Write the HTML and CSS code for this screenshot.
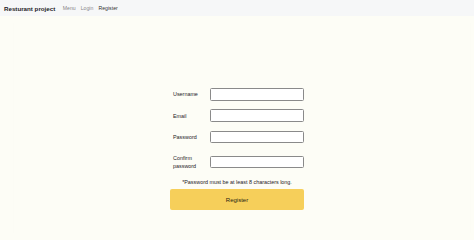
FILE: index.html
```html
<!DOCTYPE html>
<html lang="en">
<head>
<meta charset="utf-8">
<title>Resturant project</title>
<link rel="stylesheet" href="styles.css">
</head>
<body>
<nav class="navbar">
  <a class="brand" href="#">Resturant project</a>
  <div class="nav-links">
    <a class="nav-link" href="#">Menu</a>
    <a class="nav-link" href="#">Login</a>
    <a class="nav-link active" href="#">Register</a>
  </div>
</nav>
<main class="main">
  <form class="form">
    <div class="field">
      <label for="username">Username</label>
      <input id="username" type="text">
    </div>
    <div class="field">
      <label for="email">Email</label>
      <input id="email" type="email">
    </div>
    <div class="field">
      <label for="password">Password</label>
      <input id="password" type="password">
    </div>
    <div class="field field-tall">
      <label for="confirm">Confirm<br>password</label>
      <input id="confirm" type="password">
    </div>
    <p class="note">*Password must be at least 8 characters long.</p>
    <button class="btn" type="button">Register</button>
  </form>
</main>
</body>
</html>
```
FILE: styles.css
```css
html, body {
  margin: 0;
  padding: 0;
}
body {
  background: #fdfdf6;
  font-family: "Liberation Sans", Arial, sans-serif;
  color: #1f2226;
}
.navbar {
  height: 16px;
  background: #f6f7f8;
  display: flex;
  align-items: center;
  padding-left: 4px;
}
.brand {
  font-size: 6.2px;
  font-weight: 700;
  color: #1f2226;
  text-decoration: none;
  margin-right: 7.5px;
}
.nav-links {
  display: flex;
  gap: 5px;
  font-size: 5.2px;
}
.nav-link {
  color: rgba(0, 0, 0, 0.5);
  text-decoration: none;
}
.nav-link.active {
  color: rgba(0, 0, 0, 0.85);
}
.main {
  height: 217px;
  box-sizing: border-box;
  margin: 0 4px 0 14px;
  padding-top: 72px;
  display: flex;
  justify-content: center;
  box-shadow: 0 4px 4px -3px rgba(0, 0, 0, 0.16);
}
.form {
  width: 134px;
  margin-left: -10px;
}
.field {
  display: grid;
  grid-template-columns: 40px 94px;
  align-items: center;
  margin-bottom: 8.8px;
}
.field label {
  padding-left: 3px;
  font-size: 5.4px;
  line-height: 8px;
  color: #1f2226;
}
.field input {
  display: block;
  width: 100%;
  height: 12.5px;
  box-sizing: border-box;
  margin: 0;
  padding: 0;
  border: 1px solid #8a8a8a;
  border-radius: 1.5px;
  background: #fff;
}
.field-tall {
  margin-top: 11px;
  margin-bottom: 0;
}
.note {
  margin: 8px 0 3px;
  text-align: center;
  font-size: 5.4px;
  line-height: 8px;
  color: #1f2226;
}
.btn {
  display: block;
  width: 100%;
  height: 21px;
  border: none;
  border-radius: 2px;
  background: #f6cf5a;
  color: #2a2412;
  font-family: "Liberation Sans", Arial, sans-serif;
  font-size: 6px;
  padding: 0;
}
```
